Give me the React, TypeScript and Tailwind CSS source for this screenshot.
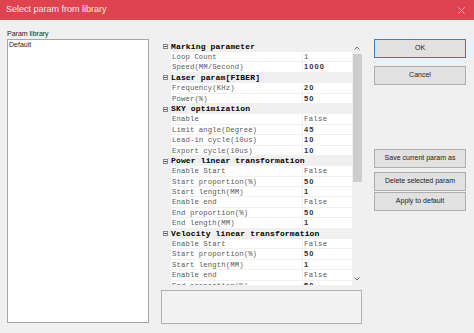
import React from 'react'

type Row = { cat?: string; name?: string; value?: string; bold?: boolean }

const rows: Row[] = [
  { cat: 'Marking parameter' },
  { name: 'Loop Count', value: '1' },
  { name: 'Speed(MM/Second)', value: '1000', bold: true },
  { cat: 'Laser param[FIBER]' },
  { name: 'Frequency(KHz)', value: '20', bold: true },
  { name: 'Power(%)', value: '50', bold: true },
  { cat: 'SKY optimization' },
  { name: 'Enable', value: 'False' },
  { name: 'Limit angle(Degree)', value: '45', bold: true },
  { name: 'Lead-in cycle(10us)', value: '10', bold: true },
  { name: 'Export cycle(10us)', value: '10', bold: true },
  { cat: 'Power linear transformation' },
  { name: 'Enable Start', value: 'False' },
  { name: 'Start proportion(%)', value: '50', bold: true },
  { name: 'Start length(MM)', value: '1', bold: true },
  { name: 'Enable end', value: 'False' },
  { name: 'End proportion(%)', value: '50', bold: true },
  { name: 'End length(MM)', value: '1', bold: true },
  { cat: 'Velocity linear transformation' },
  { name: 'Enable Start', value: 'False' },
  { name: 'Start proportion(%)', value: '50', bold: true },
  { name: 'Start length(MM)', value: '1', bold: true },
  { name: 'Enable end', value: 'False' },
  { name: 'End proportion(%)', value: '50', bold: true },
]

const mono = { fontFamily: '"Liberation Mono", "DejaVu Sans Mono", monospace' }

function Btn({ label, primary, className = '' }: { label: string; primary?: boolean; className?: string }) {
  return (
    <div
      className={`h-[19px] flex items-center justify-center bg-[#e1e1e1] text-[7px] text-[#222] border ${
        primary ? 'border-[#3a80c0]' : 'border-[#adadad]'
      } ${className}`}
    >
      {label}
    </div>
  )
}

function Minus() {
  return (
    <div className="w-[5px] h-[5px] border border-[#8a8a8a] bg-white flex items-center justify-center">
      <div className="w-[3px] h-px bg-[#555]" />
    </div>
  )
}

export default function App() {
  return (
    <div
      className="w-[474px] h-[333px] bg-[#f0f0f0] overflow-hidden"
      style={{ fontFamily: '"Liberation Sans", Arial, sans-serif' }}
    >
      {/* title bar */}
      <div className="h-[20px] bg-[#df4350] flex items-center justify-between pl-[6px] pr-[9px]">
        <span className="text-[9px] text-white/95">Select param from library</span>
        <svg width="7" height="7" viewBox="0 0 7 7" className="text-white/80">
          <path d="M0.5 0.5 L6.5 6.5 M6.5 0.5 L0.5 6.5" stroke="currentColor" strokeWidth="0.9" />
        </svg>
      </div>

      <div className="flex pl-[7px]">
        {/* library list */}
        <div className="w-[142px] pt-[9px]">
          <div className="h-[10px] leading-[10px] text-[7px] text-[#222]">Param library</div>
          <div className="h-[284px] bg-white border border-[#a6a6a6] px-[1px] text-[7px] leading-[10px] text-[#222]">
            Default
          </div>
        </div>

        {/* property grid */}
        <div className="ml-[11px] w-[202px] pt-[21.6px]">
          <div className="h-[243px] flex overflow-hidden">
            <div className="w-[192px] flex flex-col" style={mono}>
              {rows.map((r, i) =>
                r.cat ? (
                  <div key={i} className="h-[10.4px] shrink-0 flex items-center bg-[#f0f0f0]">
                    <div className="w-[10px] flex justify-end pr-[2px]">
                      <Minus />
                    </div>
                    <span className="text-[8px] font-bold tracking-[0.15px] text-black leading-[10.4px] ml-[1px]">
                      {r.cat}
                    </span>
                  </div>
                ) : (
                  <div key={i} className="h-[10.4px] shrink-0 flex">
                    <div className="w-[11px] bg-[#f0f0f0]" />
                    <div className="w-[132px] bg-white border-b border-r border-[#f0f0f0] pl-[1px] text-[7.3px] tracking-[0.1px] leading-[10px] text-[#5a5a5a] whitespace-nowrap overflow-hidden">
                      {r.name}
                    </div>
                    <div
                      className={`flex-1 bg-white border-b border-[#f0f0f0] pl-[1px] leading-[10px] whitespace-nowrap ${
                        r.bold
                          ? 'text-[7.5px] font-semibold tracking-[1.1px] text-[#333]'
                          : 'text-[7.3px] tracking-[0.3px] text-[#5a5a5a]'
                      }`}
                      style={r.bold ? { fontFamily: '"Liberation Sans", Arial, sans-serif' } : undefined}
                    >
                      {r.value}
                    </div>
                  </div>
                )
              )}
            </div>
            {/* scrollbar */}
            <div className="w-[10px] bg-[#f0f0f0] flex flex-col items-center">
              <div className="h-[12px] flex items-center justify-center">
                <svg width="6" height="4" viewBox="0 0 6 4">
                  <path d="M0.5 3.5 L3 1 L5.5 3.5" stroke="#606060" strokeWidth="0.9" fill="none" />
                </svg>
              </div>
              <div className="w-[9px] h-[128px] bg-[#cdcdcd]" />
              <div className="flex-1" />
              <div className="h-[12px] flex items-center justify-center">
                <svg width="6" height="4" viewBox="0 0 6 4">
                  <path d="M0.5 0.5 L3 3 L5.5 0.5" stroke="#606060" strokeWidth="0.9" fill="none" />
                </svg>
              </div>
            </div>
          </div>
          {/* description box */}
          <div className="mt-[5.5px] ml-[1px] w-[201px] h-[33.5px] bg-[#f2f2f2] border border-[#b0b0b0]" />
        </div>

        {/* buttons */}
        <div className="ml-[12px] w-[92px] pt-[19px] flex flex-col">
          <Btn label="OK" primary />
          <Btn label="Cancel" className="mt-[8px]" />
          <Btn label="Save current param as" className="mt-[64px]" />
          <Btn label="Delete selected param" className="mt-[4px]" />
          <Btn label="Apply to default" className="mt-[1px]" />
        </div>
      </div>
    </div>
  )
}
